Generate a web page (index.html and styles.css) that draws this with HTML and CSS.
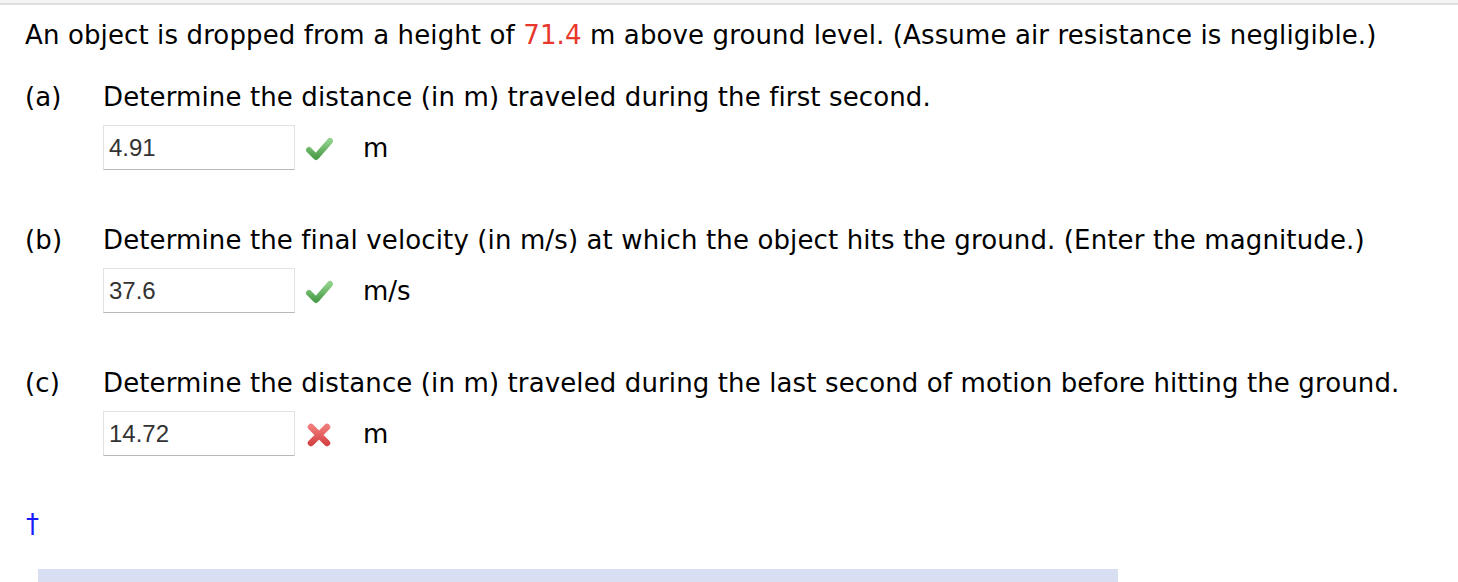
FILE: index.html
```html
<!DOCTYPE html>
<html lang="en">
<head>
  <meta charset="UTF-8">
  <meta name="viewport" content="width=device-width, initial-scale=1.0">
  <title>Free Fall Question</title>
  <link rel="stylesheet" href="styles.css">
</head>
<body>
  <div class="topline"></div>
  <div class="pregunta">
    <p class="enunciado">An object is dropped from a height of <span class="dato">71.4</span> m above ground level. (Assume air resistance is negligible.)</p>

    <div class="parte">
      <div class="cabecera"><span class="letra">(a)</span><span>Determine the distance (in m) traveled during the first second.</span></div>
      <div class="respuesta">
        <input type="text" value="4.91" readonly>
        <svg class="icono" width="28" height="26" viewBox="0 0 28 26">
          <defs>
            <linearGradient id="verde" x1="0" y1="0" x2="0" y2="1">
              <stop offset="0" stop-color="#8fd08a"/>
              <stop offset="1" stop-color="#4c9e4a"/>
            </linearGradient>
          </defs>
          <path d="M4 14 L11 21 L25 5" fill="none" stroke="url(#verde)" stroke-width="6" stroke-linecap="round" stroke-linejoin="round"/>
        </svg>
        <span class="unidad">m</span>
      </div>
    </div>

    <div class="parte">
      <div class="cabecera"><span class="letra">(b)</span><span>Determine the final velocity (in m/s) at which the object hits the ground. (Enter the magnitude.)</span></div>
      <div class="respuesta">
        <input type="text" value="37.6" readonly>
        <svg class="icono" width="28" height="26" viewBox="0 0 28 26">
          <path d="M4 14 L11 21 L25 5" fill="none" stroke="url(#verde)" stroke-width="6" stroke-linecap="round" stroke-linejoin="round"/>
        </svg>
        <span class="unidad">m/s</span>
      </div>
    </div>

    <div class="parte">
      <div class="cabecera"><span class="letra">(c)</span><span>Determine the distance (in m) traveled during the last second of motion before hitting the ground.</span></div>
      <div class="respuesta">
        <input type="text" value="14.72" readonly>
        <svg class="icono" width="28" height="26" viewBox="0 0 28 26">
          <defs>
            <linearGradient id="rojo" x1="0" y1="0" x2="0" y2="1">
              <stop offset="0" stop-color="#f07a7a"/>
              <stop offset="1" stop-color="#d64545"/>
            </linearGradient>
          </defs>
          <path d="M6 5 L22 21 M22 5 L6 21" fill="none" stroke="url(#rojo)" stroke-width="6.5" stroke-linecap="round"/>
        </svg>
        <span class="unidad">m</span>
      </div>
    </div>

    <div class="daga">&dagger;</div>
    <div class="barra"></div>
  </div>
</body>
</html>
```

FILE: styles.css
```css
body {
  margin: 0;
  font-family: 'DejaVu Sans', Verdana, sans-serif;
  color: #000;
  background: white;
}
.topline {
  height: 3px;
  background: #f4f4f4;
  border-bottom: 2px solid #dedede;
}
.pregunta {
  padding: 15px 25px 0 25px;
}
.enunciado {
  margin: 0;
  font-size: 26px;
  letter-spacing: 0.12px;
  line-height: 30px;
}
.dato {
  color: #e8382c;
}
.parte {
  margin-top: 32px;
}
.parte + .parte {
  margin-top: 55px;
}
.cabecera {
  display: flex;
  font-size: 26px;
  letter-spacing: 0.12px;
  line-height: 30px;
}
.letra {
  width: 78px;
  flex-shrink: 0;
}
.respuesta {
  display: flex;
  align-items: center;
  margin-top: 13px;
  margin-left: 78px;
}
.respuesta input {
  width: 192px;
  height: 45px;
  box-sizing: border-box;
  padding: 0 5px;
  border: 1px solid #e2e2e2;
  border-bottom: 1px solid #b9b9b9;
  font-family: 'Liberation Sans', Arial, sans-serif;
  font-size: 24px;
  color: #333;
  outline: none;
}
.icono {
  margin-left: 10px;
  margin-top: 2px;
}
.unidad {
  margin-left: 30px;
  font-size: 26px;
}
.daga {
  margin-top: 53px;
  margin-left: 1px;
  font-size: 26px;
  line-height: 30px;
  color: #1a1aff;
}
.barra {
  margin-top: 30px;
  margin-left: 13px;
  width: 1080px;
  height: 13px;
  background: #d9dff3;
}
```
